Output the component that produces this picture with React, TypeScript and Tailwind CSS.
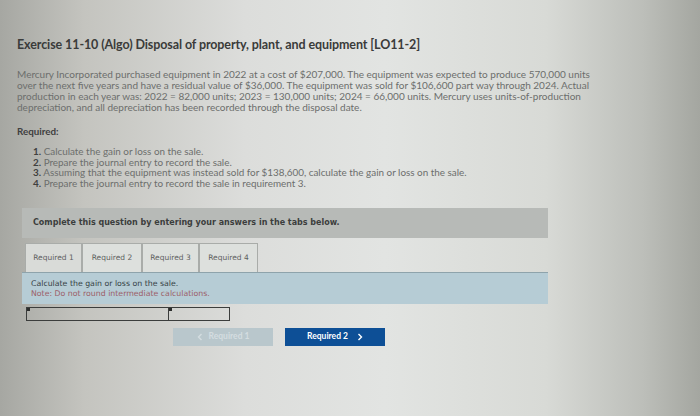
import React from 'react';

const para = [
  'Mercury Incorporated purchased equipment in 2022 at a cost of $207,000. The equipment was expected to produce 570,000 units',
  'over the next five years and have a residual value of $36,000. The equipment was sold for $106,600 part way through 2024. Actual',
  'production in each year was: 2022 = 82,000 units; 2023 = 130,000 units; 2024 = 66,000 units. Mercury uses units-of-production',
  'depreciation, and all depreciation has been recorded through the disposal date.',
];

const reqs = [
  'Calculate the gain or loss on the sale.',
  'Prepare the journal entry to record the sale.',
  'Assuming that the equipment was instead sold for $138,600, calculate the gain or loss on the sale.',
  'Prepare the journal entry to record the sale in requirement 3.',
];

const tabs = [
  { label: 'Required 1', w: 'w-[57px]', active: true },
  { label: 'Required 2', w: 'w-[60px]', active: false },
  { label: 'Required 3', w: 'w-[57px]', active: false },
  { label: 'Required 4', w: 'w-[59px]', active: false },
];

export default function App() {
  return (
    <div className="w-[700px] h-[416px] overflow-hidden bg-[linear-gradient(90deg,#a6a7a2_0%,#c4c4bf_12%,#dcdddb_35%,#e2e4e2_55%,#d8dad6_78%,#bcbeb9_92%,#a4a6a0_100%)] font-['Lato','Liberation_Sans',sans-serif]">
      <div className="pt-[37px] pl-[17px]">
        <h1 className="text-[12.5px] leading-[16px] font-bold text-[#3a3b3a] tracking-[-0.1px]">
          Exercise 11-10 (Algo) Disposal of property, plant, and equipment [LO11-2]
        </h1>

        <div className="mt-[16px] text-[10px] leading-[11px] text-[#6c6e6c]">
          {para.map((l) => (
            <div key={l} className="whitespace-nowrap">{l}</div>
          ))}
        </div>

        <div className="mt-[12px] text-[9.8px] leading-[12px] font-bold text-[#3f403f]">Required:</div>

        <ol className="mt-[9px] pl-[16px] text-[9.9px] leading-[10.7px] text-[#6c6e6c]">
          {reqs.map((r, i) => (
            <li key={r} className="whitespace-nowrap">
              <span className="font-bold text-[#3f403f]">{i + 1}.</span> {r}
            </li>
          ))}
        </ol>

        <div className="ml-[5px] mt-[19px] w-[526px] font-['DejaVu_Sans','Verdana',sans-serif]">
          <div className="h-[30px] bg-[#b7bab7] flex items-center pl-[11px]">
            <span className="text-[8px] font-bold text-[#3c3e3d]">
              Complete this question by entering your answers in the tabs below.
            </span>
          </div>

          <div className="mt-[5px] flex pl-[3px]">
            {tabs.map((t) => (
              <div
                key={t.label}
                className={`${t.w} h-[29px] flex items-center justify-center border border-b-0 border-[#a9aca9] text-[7.5px] text-[#5e605f] ${
                  t.active ? 'bg-[#d9dbd8]' : 'bg-[#dde0dd]'
                }`}
              >
                {t.label}
              </div>
            ))}
          </div>

          <div className="h-[32px] bg-[#b6ccd5] border-t border-[#8ea3ab] pl-[9px] pt-[6px] text-[7.8px] leading-[10px]">
            <div className="text-[#354044]">Calculate the gain or loss on the sale.</div>
            <div className="text-[#9c5e68]">Note: Do not round intermediate calculations.</div>
          </div>

          <div className="mt-[3px] ml-[4px] flex">
            <div className="relative w-[143px] h-[14px] border border-[#3b3d3c]">
              <span className="absolute left-0 top-0 w-[3px] h-[3px] bg-[#2b2d2c]" />
            </div>
            <div className="relative w-[61px] h-[14px] border border-l-0 border-[#3b3d3c]">
              <span className="absolute left-0 top-0 w-[3px] h-[3px] bg-[#2b2d2c]" />
            </div>
          </div>

          <div className="mt-[7px] ml-[151px] flex gap-[12px] font-['Lato','Liberation_Sans',sans-serif]">
            <div className="w-[100px] h-[18px] bg-[#b9c7cc] flex items-center justify-center gap-[6px] text-[8.5px] font-bold text-[#d4dde0]">
              <svg width="6" height="8" viewBox="0 0 6 8" fill="none" stroke="currentColor" strokeWidth="1.4">
                <path d="M4.5 1 L1.5 4 L4.5 7" />
              </svg>
              <span>Required 1</span>
            </div>
            <div className="w-[100px] h-[18px] bg-[#0d4f96] flex items-center justify-center gap-[9px] text-[8.5px] font-bold text-white">
              <span>Required 2</span>
              <svg width="6" height="8" viewBox="0 0 6 8" fill="none" stroke="currentColor" strokeWidth="1.4">
                <path d="M1.5 1 L4.5 4 L1.5 7" />
              </svg>
            </div>
          </div>
        </div>
      </div>
    </div>
  );
}
